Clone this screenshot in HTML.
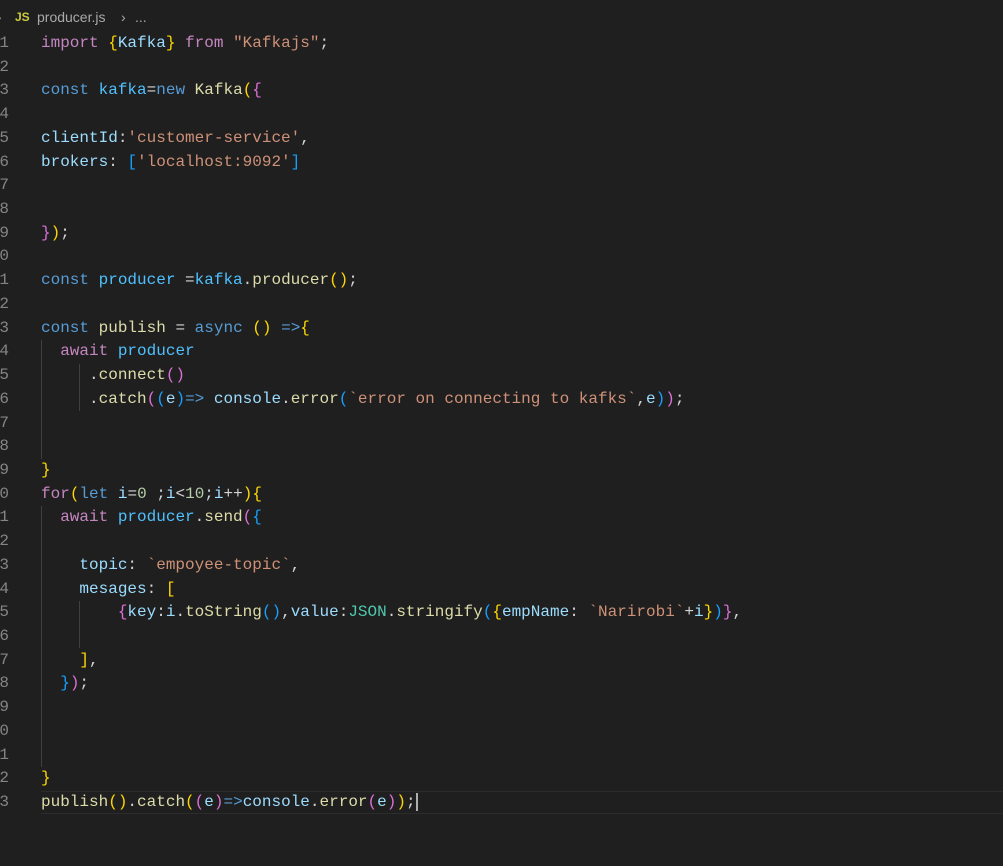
<!DOCTYPE html>
<html><head><style>
html,body{margin:0;padding:0;background:#1f1f1f;width:1003px;height:866px;overflow:hidden}
.bc{position:absolute;top:0;left:0;height:30px;font:14px "Liberation Sans",sans-serif;color:#a9a9a9;line-height:34px}
.js{position:absolute;left:15px;color:#cbcb41;font-weight:bold;font-size:12px}
.ch{position:absolute;left:-3px;top:0;color:#888}
.code{position:absolute;top:32px;left:0;width:1003px;font:16px/23.72px "Liberation Mono",monospace;color:#d4d4d4}
.ln{position:absolute;left:-20px;width:29px;text-align:right;color:#858585}
.tx{position:absolute;left:41px;white-space:pre}
.r{height:23.72px;position:relative}
.k{color:#c586c0}.b{color:#569cd6}.c{color:#4fc1ff}.v{color:#9cdcfe}.f{color:#dcdcaa}.s{color:#ce9178}.t{color:#4ec9b0}
.g{color:#ffd700}.p{color:#da70d6}.u{color:#179fff}
.cur{position:absolute;left:41px;right:0;top:791px;height:23px;border-top:1px solid #2c2c2c;border-bottom:1px solid #2c2c2c;box-sizing:border-box}
.ig{position:absolute;width:1px;background:#404040}
</style></head><body>
<div class="bc"><span class="ch">›</span><span class="js">JS</span><span style="position:absolute;left:37px">producer.js</span><span style="position:absolute;left:121px">›</span><span style="position:absolute;left:135px">...</span></div>
<div class="cur"></div>
<div class="ig" style="left:41px;top:340px;height:119px"></div>
<div class="ig" style="left:79px;top:364px;height:47px"></div>
<div class="ig" style="left:41px;top:506px;height:261px"></div>
<div class="ig" style="left:79px;top:601px;height:47px"></div>
<div class="code"><div class="r"><span class="ln">1</span><span class="tx"><span class="k">import</span> <span class="g">{</span><span class="v">Kafka</span><span class="g">}</span> <span class="k">from</span> <span class="s">"Kafkajs"</span>;</span></div><div class="r"><span class="ln">2</span></div><div class="r"><span class="ln">3</span><span class="tx"><span class="b">const</span> <span class="c">kafka</span>=<span class="b">new</span> <span class="f">Kafka</span><span class="g">(</span><span class="p">{</span></span></div><div class="r"><span class="ln">4</span></div><div class="r"><span class="ln">5</span><span class="tx"><span class="v">clientId</span>:<span class="s">'customer-service'</span>,</span></div><div class="r"><span class="ln">6</span><span class="tx"><span class="v">brokers</span>: <span class="u">[</span><span class="s">'localhost:9092'</span><span class="u">]</span></span></div><div class="r"><span class="ln">7</span></div><div class="r"><span class="ln">8</span></div><div class="r"><span class="ln">9</span><span class="tx"><span class="p">}</span><span class="g">)</span>;</span></div><div class="r"><span class="ln">10</span></div><div class="r"><span class="ln">11</span><span class="tx"><span class="b">const</span> <span class="c">producer</span> =<span class="c">kafka</span>.<span class="f">producer</span><span class="g">()</span>;</span></div><div class="r"><span class="ln">12</span></div><div class="r"><span class="ln">13</span><span class="tx"><span class="b">const</span> <span class="f">publish</span> = <span class="b">async</span> <span class="g">()</span> <span class="b">=&gt;</span><span class="g">{</span></span></div><div class="r"><span class="ln">14</span><span class="tx">  <span class="k">await</span> <span class="c">producer</span></span></div><div class="r"><span class="ln">15</span><span class="tx">     .<span class="f">connect</span><span class="p">()</span></span></div><div class="r"><span class="ln">16</span><span class="tx">     .<span class="f">catch</span><span class="p">(</span><span class="u">(</span><span class="v">e</span><span class="u">)</span><span class="b">=&gt;</span> <span class="v">console</span>.<span class="f">error</span><span class="u">(</span><span class="s">`error on connecting to kafks`</span>,<span class="v">e</span><span class="u">)</span><span class="p">)</span>;</span></div><div class="r"><span class="ln">17</span></div><div class="r"><span class="ln">18</span></div><div class="r"><span class="ln">19</span><span class="tx"><span class="g">}</span></span></div><div class="r"><span class="ln">20</span><span class="tx"><span class="k">for</span><span class="g">(</span><span class="b">let</span> <span class="v">i</span>=<span style="color:#b5cea8">0</span> ;<span class="v">i</span>&lt;<span style="color:#b5cea8">10</span>;<span class="v">i</span>++<span class="g">)</span><span class="g">{</span></span></div><div class="r"><span class="ln">21</span><span class="tx">  <span class="k">await</span> <span class="c">producer</span>.<span class="f">send</span><span class="p">(</span><span class="u">{</span></span></div><div class="r"><span class="ln">22</span></div><div class="r"><span class="ln">23</span><span class="tx">    <span class="v">topic</span>: <span class="s">`empoyee-topic`</span>,</span></div><div class="r"><span class="ln">24</span><span class="tx">    <span class="v">mesages</span>: <span class="g">[</span></span></div><div class="r"><span class="ln">25</span><span class="tx">        <span class="p">{</span><span class="v">key</span>:<span class="v">i</span>.<span class="f">toString</span><span class="u">()</span>,<span class="v">value</span>:<span class="t">JSON</span>.<span class="f">stringify</span><span class="u">(</span><span class="g">{</span><span class="v">empName</span>: <span class="s">`Narirobi`</span>+<span class="v">i</span><span class="g">}</span><span class="u">)</span><span class="p">}</span>,</span></div><div class="r"><span class="ln">26</span></div><div class="r"><span class="ln">27</span><span class="tx">    <span class="g">]</span>,</span></div><div class="r"><span class="ln">28</span><span class="tx">  <span class="u">}</span><span class="p">)</span>;</span></div><div class="r"><span class="ln">29</span></div><div class="r"><span class="ln">30</span></div><div class="r"><span class="ln">31</span></div><div class="r"><span class="ln">32</span><span class="tx"><span class="g">}</span></span></div><div class="r"><span class="ln">33</span><span class="tx"><span class="f">publish</span><span class="g">()</span>.<span class="f">catch</span><span class="g">(</span><span class="p">(</span><span class="v">e</span><span class="p">)</span><span class="b">=&gt;</span><span class="v">console</span>.<span class="f">error</span><span class="p">(</span><span class="v">e</span><span class="p">)</span><span class="g">)</span>;<span style="border-left:2px solid #aeafad"></span></span></div></div>
</body></html>
